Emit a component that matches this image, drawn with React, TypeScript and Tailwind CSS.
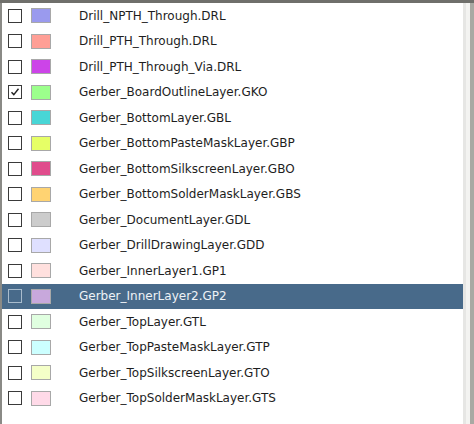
import React from 'react';

const layers = [
  { name: 'Drill_NPTH_Through.DRL', color: '#9a9aee' },
  { name: 'Drill_PTH_Through.DRL', color: '#ff9f96' },
  { name: 'Drill_PTH_Through_Via.DRL', color: '#cc44e8' },
  { name: 'Gerber_BoardOutlineLayer.GKO', color: '#9cff8c', checked: true },
  { name: 'Gerber_BottomLayer.GBL', color: '#48d6d6' },
  { name: 'Gerber_BottomPasteMaskLayer.GBP', color: '#e6ff66' },
  { name: 'Gerber_BottomSilkscreenLayer.GBO', color: '#e04c8c' },
  { name: 'Gerber_BottomSolderMaskLayer.GBS', color: '#ffd372' },
  { name: 'Gerber_DocumentLayer.GDL', color: '#cccccc' },
  { name: 'Gerber_DrillDrawingLayer.GDD', color: '#dfe0ff' },
  { name: 'Gerber_InnerLayer1.GP1', color: '#ffe0de' },
  { name: 'Gerber_InnerLayer2.GP2', color: '#c8a8dc', selected: true },
  { name: 'Gerber_TopLayer.GTL', color: '#e0ffe0' },
  { name: 'Gerber_TopPasteMaskLayer.GTP', color: '#ccffff' },
  { name: 'Gerber_TopSilkscreenLayer.GTO', color: '#f4ffc8' },
  { name: 'Gerber_TopSolderMaskLayer.GTS', color: '#ffdae8' },
];

function Checkbox({ checked, selected }: { checked?: boolean; selected?: boolean }) {
  return (
    <div
      className={`w-[14px] h-[14px] border-[1.5px] flex items-center justify-center ${
        selected ? 'border-[#a9bccd] bg-[#486a8a]' : 'border-[#3a3a3a] bg-white'
      }`}
    >
      {checked && (
        <svg width="10" height="10" viewBox="0 0 10 10">
          <path d="M1.5 5.2 L3.8 7.6 L8.5 1.8" fill="none" stroke="#222" strokeWidth="1.4" />
        </svg>
      )}
    </div>
  );
}

export default function App() {
  return (
    <div className="w-[474px] h-[424px] bg-white flex flex-col overflow-hidden font-['DejaVu_Sans',sans-serif]">
      <div className="h-[3px] bg-[#6f6f6b] shrink-0" />
      <div className="flex flex-1 min-h-0">
        <div className="w-[2px] bg-[#8a8a86]" />
        <div className="flex-1 flex flex-col">
          {layers.map((l) => (
            <div
              key={l.name}
              className={`h-[25.5px] flex items-center pl-[6px] ${
                l.selected ? 'bg-[#486a8a] text-[#eef2f6]' : 'text-[#1e1e1e]'
              }`}
            >
              <Checkbox checked={l.checked} selected={l.selected} />
              <div
                className="ml-[9px] w-[20px] h-[15px] border border-[#a8a8a8]"
                style={{ backgroundColor: l.color }}
              />
              <span className="ml-[28px] text-[12px] leading-none">{l.name}</span>
            </div>
          ))}
        </div>
        <div className="w-[3px] bg-[#e6e6e4]" />
        <div className="w-[4px] bg-[#f3f3f1]" />
        <div className="w-[4px] bg-[#a9a9a3]" />
      </div>
    </div>
  );
}
